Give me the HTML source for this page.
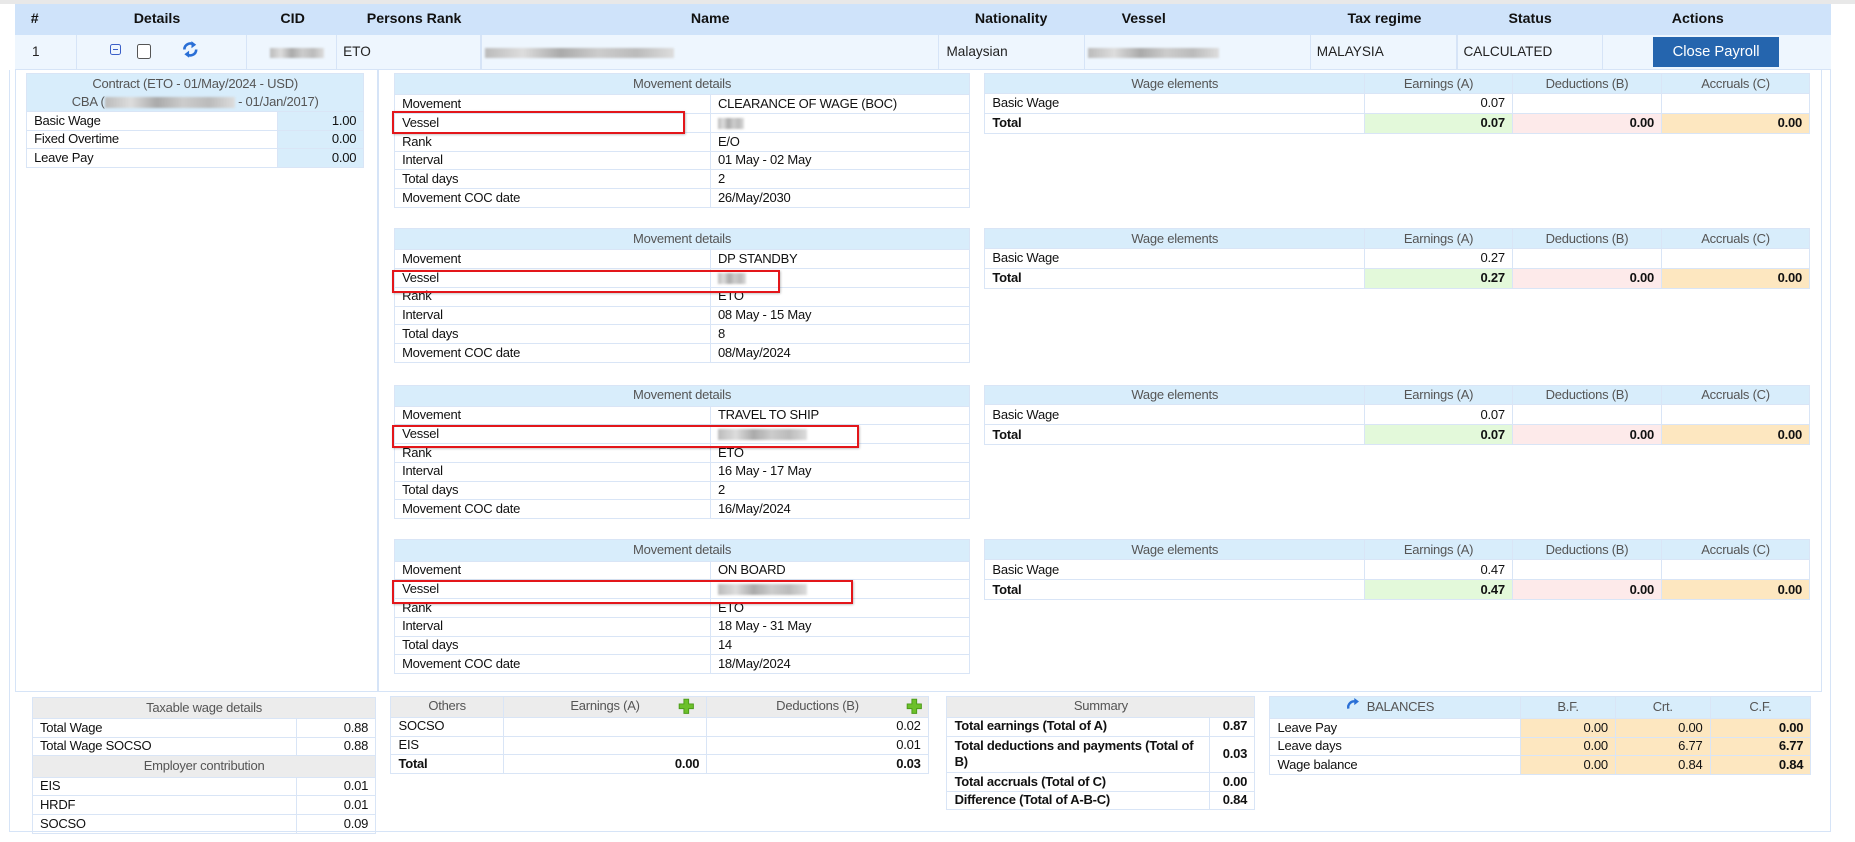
<!DOCTYPE html>
<html><head><meta charset="utf-8"><style>
html,body{margin:0;padding:0;background:#fff;overflow:hidden}
body{width:1855px;height:842px}
#w{position:relative;width:1568px;height:712px;zoom:1.1831;font-family:"Liberation Sans",sans-serif;font-size:11.5px;color:#111}
.a{position:absolute}
table{position:absolute;border-collapse:collapse;table-layout:fixed;font-size:11px;letter-spacing:-0.2px}
td{border:1px solid #d9e5f6;padding:0 6px;height:15px;line-height:14px;white-space:nowrap;overflow:hidden}
.h td{text-align:center;color:#555;background:#d8edfb;height:17px}
.r{text-align:right}
.b{font-weight:bold}
.g{background:#e3f9da}.p{background:#fdeaea}.o{background:#fde7c0}
.gr td{background:#ececec}
.wt td{height:16px}
.blur{display:inline-block;height:9px;background:linear-gradient(90deg,#bbb,#ddd,#aaa,#ccc,#bbb,#ddd);filter:blur(1px);vertical-align:middle}
.red{position:absolute;border:2px solid #e3161a;box-shadow:1px 1px 2px rgba(0,0,0,.3)}
.hd{position:absolute;top:3px;height:27px;line-height:27px;font-weight:bold;font-size:12px;color:#111}
.dc{position:absolute;top:30px;height:28px;line-height:28px;font-size:11.5px;color:#222}
</style></head><body><div id="w">
<div class="a" style="left:0;top:0;width:1568px;height:3px;background:#e8e8e8"></div>
<div class="a" style="left:13px;top:3px;width:1535px;height:27px;background:#cfe3fa"></div>
<div class="a" style="left:13px;top:30px;width:1535px;height:28px;background:#eef6fe;border-bottom:1px solid #d6e4f7"></div>
<div class="hd" style="left:26px">#</div>
<div class="hd" style="left:113px">Details</div>
<div class="hd" style="left:237px">CID</div>
<div class="hd" style="left:310px">Persons Rank</div>
<div class="hd" style="left:584px">Name</div>
<div class="hd" style="left:824px">Nationality</div>
<div class="hd" style="left:948px">Vessel</div>
<div class="hd" style="left:1139px">Tax regime</div>
<div class="hd" style="left:1275px">Status</div>
<div class="hd" style="left:1413px">Actions</div>
<div class="a" style="left:64px;top:30px;width:1px;height:28px;background:#d6e4f7"></div>
<div class="a" style="left:208px;top:30px;width:1px;height:28px;background:#d6e4f7"></div>
<div class="a" style="left:284px;top:30px;width:1px;height:28px;background:#d6e4f7"></div>
<div class="a" style="left:406px;top:30px;width:1px;height:28px;background:#d6e4f7"></div>
<div class="a" style="left:793px;top:30px;width:1px;height:28px;background:#d6e4f7"></div>
<div class="a" style="left:916px;top:30px;width:1px;height:28px;background:#d6e4f7"></div>
<div class="a" style="left:1107px;top:30px;width:1px;height:28px;background:#d6e4f7"></div>
<div class="a" style="left:1231px;top:30px;width:1px;height:28px;background:#d6e4f7"></div>
<div class="a" style="left:1354px;top:30px;width:1px;height:28px;background:#d6e4f7"></div>
<div class="dc" style="left:27px">1</div>
<div class="a" style="left:93px;top:37px;width:8px;height:8px;border:1px solid #3a5fc8;border-radius:2px"><div class="a" style="left:2px;top:3.5px;width:4px;height:1px;background:#3a5fc8"></div></div>
<div class="a" style="left:116px;top:37px;width:10px;height:11px;border:1px solid #555;border-radius:2px;background:#fff"></div>
<svg class="a" style="left:154px;top:34px" width="14" height="16" viewBox="0 0 14 16"><path d="M2 8 A5 5 0 0 1 10 4" stroke="#2a6fd6" stroke-width="2.2" fill="none"/><path d="M8 1 L12 4 L8 7z" fill="#2a6fd6"/><path d="M12 8 A5 5 0 0 1 4 12" stroke="#2a6fd6" stroke-width="2.2" fill="none"/><path d="M6 9 L2 12 L6 15z" fill="#2a6fd6"/></svg>
<div class="dc" style="left:228px"><span class="blur" style="width:46px"></span></div>
<div class="dc" style="left:290px">ETO</div>
<div class="dc" style="left:410px"><span class="blur" style="width:160px"></span></div>
<div class="dc" style="left:800px">Malaysian</div>
<div class="dc" style="left:920px"><span class="blur" style="width:110px"></span></div>
<div class="dc" style="left:1113px">MALAYSIA</div>
<div class="dc" style="left:1237px">CALCULATED</div>
<div class="a" style="left:1397px;top:31px;width:107px;height:26px;background:#2565ae;color:#fff;text-align:center;line-height:26px;font-size:12.5px">Close Payroll</div>
<div class="a" style="left:8px;top:59px;width:1540px;height:644px;border-left:1px solid #d6e4f7;border-right:1px solid #d6e4f7;border-bottom:1px solid #d6e4f7;box-sizing:border-box"></div>
<div class="a" style="left:13px;top:59px;width:1527px;height:526px;border-left:1px solid #d6e4f7;border-right:1px solid #d6e4f7;border-bottom:1px solid #d6e4f7;box-sizing:border-box"></div>
<div class="a" style="left:319px;top:59px;width:1px;height:526px;background:#d6e4f7"></div>
<table style="left:22px;top:62px;width:286px"><colgroup><col style="width:212px"><col></colgroup>
<tr class="h"><td colspan="2" style="height:31px;line-height:15px">Contract (ETO - 01/May/2024 - USD)<br>CBA (<span class="blur" style="width:110px"></span> - 01/Jan/2017)</td></tr>
<tr><td>Basic Wage</td><td class="r" style="background:#d8edfb">1.00</td></tr>
<tr><td>Fixed Overtime</td><td class="r" style="background:#d8edfb">0.00</td></tr>
<tr><td>Leave Pay</td><td class="r" style="background:#d8edfb">0.00</td></tr></table>

<table style="left:333px;top:62px;width:487px"><colgroup><col style="width:267px"><col></colgroup>
<tr class="h"><td colspan="2">Movement details</td></tr>
<tr><td>Movement</td><td>CLEARANCE OF WAGE (BOC)</td></tr>
<tr><td>Vessel</td><td><span class="blur" style="width:22px"></span></td></tr>
<tr><td>Rank</td><td>E/O</td></tr>
<tr><td>Interval</td><td>01 May - 02 May</td></tr>
<tr><td>Total days</td><td>2</td></tr>
<tr><td>Movement COC date</td><td>26/May/2030</td></tr></table>
<div class="red" style="left:331px;top:94px;width:245px;height:16px"></div>
<table style="left:333px;top:193px;width:487px"><colgroup><col style="width:267px"><col></colgroup>
<tr class="h"><td colspan="2">Movement details</td></tr>
<tr><td>Movement</td><td>DP STANDBY</td></tr>
<tr><td>Vessel</td><td><span class="blur" style="width:24px"></span></td></tr>
<tr><td>Rank</td><td>ETO</td></tr>
<tr><td>Interval</td><td>08 May - 15 May</td></tr>
<tr><td>Total days</td><td>8</td></tr>
<tr><td>Movement COC date</td><td>08/May/2024</td></tr></table>
<div class="red" style="left:331px;top:228px;width:325px;height:16px"></div>
<table style="left:333px;top:325px;width:487px"><colgroup><col style="width:267px"><col></colgroup>
<tr class="h"><td colspan="2">Movement details</td></tr>
<tr><td>Movement</td><td>TRAVEL TO SHIP</td></tr>
<tr><td>Vessel</td><td><span class="blur" style="width:75px"></span></td></tr>
<tr><td>Rank</td><td>ETO</td></tr>
<tr><td>Interval</td><td>16 May - 17 May</td></tr>
<tr><td>Total days</td><td>2</td></tr>
<tr><td>Movement COC date</td><td>16/May/2024</td></tr></table>
<div class="red" style="left:331px;top:359px;width:392px;height:16px"></div>
<table style="left:333px;top:456px;width:487px"><colgroup><col style="width:267px"><col></colgroup>
<tr class="h"><td colspan="2">Movement details</td></tr>
<tr><td>Movement</td><td>ON BOARD</td></tr>
<tr><td>Vessel</td><td><span class="blur" style="width:75px"></span></td></tr>
<tr><td>Rank</td><td>ETO</td></tr>
<tr><td>Interval</td><td>18 May - 31 May</td></tr>
<tr><td>Total days</td><td>14</td></tr>
<tr><td>Movement COC date</td><td>18/May/2024</td></tr></table>
<div class="red" style="left:331px;top:490px;width:387px;height:17px"></div>

<table class="wt" style="left:832px;top:62px;width:698px"><colgroup><col style="width:321px"><col style="width:125px"><col style="width:126px"><col></colgroup>
<tr class="h"><td>Wage elements</td><td class="g">Earnings (A)</td><td class="p">Deductions (B)</td><td class="o">Accruals (C)</td></tr>
<tr><td>Basic Wage</td><td class="r">0.07</td><td></td><td></td></tr>
<tr class="b"><td>Total</td><td class="r g">0.07</td><td class="r p">0.00</td><td class="r o">0.00</td></tr></table>
<table class="wt" style="left:832px;top:193px;width:698px"><colgroup><col style="width:321px"><col style="width:125px"><col style="width:126px"><col></colgroup>
<tr class="h"><td>Wage elements</td><td class="g">Earnings (A)</td><td class="p">Deductions (B)</td><td class="o">Accruals (C)</td></tr>
<tr><td>Basic Wage</td><td class="r">0.27</td><td></td><td></td></tr>
<tr class="b"><td>Total</td><td class="r g">0.27</td><td class="r p">0.00</td><td class="r o">0.00</td></tr></table>
<table class="wt" style="left:832px;top:325px;width:698px"><colgroup><col style="width:321px"><col style="width:125px"><col style="width:126px"><col></colgroup>
<tr class="h"><td>Wage elements</td><td class="g">Earnings (A)</td><td class="p">Deductions (B)</td><td class="o">Accruals (C)</td></tr>
<tr><td>Basic Wage</td><td class="r">0.07</td><td></td><td></td></tr>
<tr class="b"><td>Total</td><td class="r g">0.07</td><td class="r p">0.00</td><td class="r o">0.00</td></tr></table>
<table class="wt" style="left:832px;top:456px;width:698px"><colgroup><col style="width:321px"><col style="width:125px"><col style="width:126px"><col></colgroup>
<tr class="h"><td>Wage elements</td><td class="g">Earnings (A)</td><td class="p">Deductions (B)</td><td class="o">Accruals (C)</td></tr>
<tr><td>Basic Wage</td><td class="r">0.47</td><td></td><td></td></tr>
<tr class="b"><td>Total</td><td class="r g">0.47</td><td class="r p">0.00</td><td class="r o">0.00</td></tr></table>

<table style="left:27px;top:589px;width:291px"><colgroup><col style="width:223px"><col></colgroup>
<tr class="h gr"><td colspan="2">Taxable wage details</td></tr>
<tr><td>Total Wage</td><td class="r">0.88</td></tr>
<tr><td>Total Wage SOCSO</td><td class="r">0.88</td></tr>
<tr class="h gr"><td colspan="2">Employer contribution</td></tr>
<tr><td>EIS</td><td class="r">0.01</td></tr>
<tr><td>HRDF</td><td class="r">0.01</td></tr>
<tr><td>SOCSO</td><td class="r">0.09</td></tr></table>
<table style="left:330px;top:588px;width:455px"><colgroup><col style="width:95px"><col style="width:172px"><col></colgroup>
<tr class="h gr"><td>Others</td><td>Earnings (A)</td><td>Deductions (B)</td></tr>
<tr><td>SOCSO</td><td></td><td class="r">0.02</td></tr>
<tr><td>EIS</td><td></td><td class="r">0.01</td></tr>
<tr class="b"><td>Total</td><td class="r">0.00</td><td class="r">0.03</td></tr></table>
<svg class="a" style="left:573px;top:590px" width="14" height="14" viewBox="0 0 14 14"><path d="M5 1h4v4h4v4h-4v4h-4v-4h-4v-4h4z" fill="#6cc02a" stroke="#4a9a18" stroke-width="0.8"/></svg>
<svg class="a" style="left:766px;top:590px" width="14" height="14" viewBox="0 0 14 14"><path d="M5 1h4v4h4v4h-4v4h-4v-4h-4v-4h4z" fill="#6cc02a" stroke="#4a9a18" stroke-width="0.8"/></svg>
<table style="left:800px;top:588px;width:261px"><colgroup><col style="width:222px"><col></colgroup>
<tr class="h gr"><td colspan="2">Summary</td></tr>
<tr class="b"><td>Total earnings (Total of A)</td><td class="r">0.87</td></tr>
<tr class="b"><td style="white-space:normal;height:30px">Total deductions and payments (Total of B)</td><td class="r">0.03</td></tr>
<tr class="b"><td>Total accruals (Total of C)</td><td class="r">0.00</td></tr>
<tr class="b"><td>Difference (Total of A-B-C)</td><td class="r">0.84</td></tr></table>
<table style="left:1073px;top:588px;width:458px"><colgroup><col style="width:212px"><col style="width:80px"><col style="width:80px"><col></colgroup>
<tr class="h"><td class="o" style="height:18px">&nbsp;&nbsp;&nbsp;BALANCES</td><td class="o">B.F.</td><td class="o">Crt.</td><td class="o">C.F.</td></tr>
<tr><td>Leave Pay</td><td class="r o">0.00</td><td class="r o">0.00</td><td class="r o b">0.00</td></tr>
<tr><td>Leave days</td><td class="r o">0.00</td><td class="r o">6.77</td><td class="r o b">6.77</td></tr>
<tr><td>Wage balance</td><td class="r o">0.00</td><td class="r o">0.84</td><td class="r o b">0.84</td></tr></table>
<svg class="a" style="left:1138px;top:590px" width="12" height="11" viewBox="0 0 12 11"><path d="M2 9 A5 5 0 0 1 8 3" stroke="#2a6fd6" stroke-width="2" fill="none"/><path d="M7 0 L11 3 L7 6z" fill="#2a6fd6"/></svg>
</div></body></html>
